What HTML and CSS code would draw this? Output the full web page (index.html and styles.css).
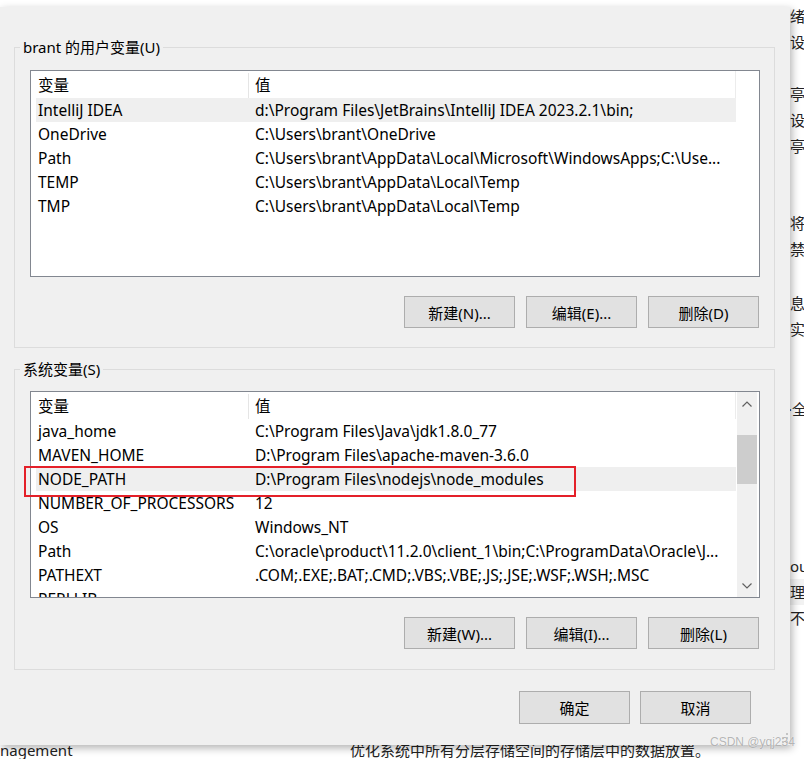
FILE: index.html
```html
<!DOCTYPE html>
<html lang="zh-CN">
<head>
    <meta charset="UTF-8">
    <meta name="viewport" content="width=device-width, initial-scale=1.0">
    <title>环境变量</title>
    <link rel="stylesheet" href="styles.css">
</head>
<body>
    <div class="backdrop">
        <div class="side">
            <div class="para p1"><div>绪论</div><div>设置</div></div>
            <div class="para p2"><div>亭止</div><div>设备</div><div>亭止</div></div>
            <div class="para p3"><div>将若</div><div>禁用</div></div>
            <div class="para p4"><div>息来</div><div>实现</div></div>
            <div class="para p5"><div class="dot-line"><span class="dot">·</span>全局</div></div>
            <div class="para p6"><div class="latin">out</div><div class="code">理器</div><div>不提</div></div>
        </div>
        <div class="foot">
            <span class="foot-left">nagement</span>
            <span class="foot-right">优化系统中所有分层存储空间的存储层中的数据放置。</span>
        </div>
    </div>

    <div class="dialog">
        <fieldset class="group group-user">
            <legend>brant 的用户变量(U)</legend>
            <div class="list">
                <div class="list-body">
                    <div class="list-head"><span class="col-name">变量</span><span class="col-value">值</span></div>
                    <div class="row selected"><span class="col-name">IntelliJ IDEA</span><span class="col-value">d:\Program Files\JetBrains\IntelliJ IDEA 2023.2.1\bin;</span></div>
                    <div class="row"><span class="col-name">OneDrive</span><span class="col-value">C:\Users\brant\OneDrive</span></div>
                    <div class="row"><span class="col-name">Path</span><span class="col-value">C:\Users\brant\AppData\Local\Microsoft\WindowsApps;C:\Use...</span></div>
                    <div class="row"><span class="col-name">TEMP</span><span class="col-value">C:\Users\brant\AppData\Local\Temp</span></div>
                    <div class="row"><span class="col-name">TMP</span><span class="col-value">C:\Users\brant\AppData\Local\Temp</span></div>
                </div>
            </div>
            <div class="buttons">
                <button class="btn">新建(N)...</button>
                <button class="btn">编辑(E)...</button>
                <button class="btn">删除(D)</button>
            </div>
        </fieldset>

        <fieldset class="group group-system">
            <legend>系统变量(S)</legend>
            <div class="list">
                <div class="list-body">
                    <div class="list-head"><span class="col-name">变量</span><span class="col-value">值</span></div>
                    <div class="row"><span class="col-name">java_home</span><span class="col-value">C:\Program Files\Java\jdk1.8.0_77</span></div>
                    <div class="row"><span class="col-name">MAVEN_HOME</span><span class="col-value">D:\Program Files\apache-maven-3.6.0</span></div>
                    <div class="row selected"><span class="col-name">NODE_PATH</span><span class="col-value">D:\Program Files\nodejs\node_modules</span></div>
                    <div class="row"><span class="col-name">NUMBER_OF_PROCESSORS</span><span class="col-value">12</span></div>
                    <div class="row"><span class="col-name">OS</span><span class="col-value">Windows_NT</span></div>
                    <div class="row"><span class="col-name">Path</span><span class="col-value">C:\oracle\product\11.2.0\client_1\bin;C:\ProgramData\Oracle\J...</span></div>
                    <div class="row"><span class="col-name">PATHEXT</span><span class="col-value">.COM;.EXE;.BAT;.CMD;.VBS;.VBE;.JS;.JSE;.WSF;.WSH;.MSC</span></div>
                    <div class="row"><span class="col-name">PERLLIB</span><span class="col-value"></span></div>
                </div>
                <div class="scrollbar">
                    <div class="scroll-btn">
                        <svg width="10" height="6" viewBox="0 0 10 6"><polyline points="0.5,5.5 5,1 9.5,5.5" fill="none" stroke="#606060" stroke-width="1.2"/></svg>
                    </div>
                    <div class="track"><div class="thumb"></div></div>
                    <div class="scroll-btn">
                        <svg width="10" height="6" viewBox="0 0 10 6"><polyline points="0.5,0.5 5,5 9.5,0.5" fill="none" stroke="#606060" stroke-width="1.2"/></svg>
                    </div>
                </div>
            </div>
            <div class="buttons">
                <button class="btn">新建(W)...</button>
                <button class="btn">编辑(I)...</button>
                <button class="btn">删除(L)</button>
            </div>
        </fieldset>

        <div class="dialog-buttons">
            <button class="btn">确定</button>
            <button class="btn">取消</button>
        </div>

        <!-- red annotation around NODE_PATH -->
        <div class="mark-box"></div>

        <svg class="grip" width="8" height="12" viewBox="0 0 8 12">
            <rect x="5" y="1" width="2" height="2" fill="#c4c4c4"/>
            <rect x="5" y="5" width="2" height="2" fill="#c4c4c4"/>
            <rect x="1" y="5" width="2" height="2" fill="#c4c4c4"/>
            <rect x="5" y="9" width="2" height="2" fill="#c4c4c4"/>
            <rect x="1" y="9" width="2" height="2" fill="#c4c4c4"/>
        </svg>
    </div>

    <div class="watermark">CSDN @yqj234</div>
</body>
</html>
```

FILE: styles.css
```css
html, body {
    margin: 0;
    padding: 0;
    width: 804px;
    height: 759px;
    overflow: hidden;
    background-color: #fff;
}
body {
    position: relative;
    font-family: "Noto Sans", "Noto Sans CJK SC", sans-serif;
    font-size: 15px;
    color: #000;
}

/* page behind the dialog */
.backdrop {
    display: flex;
    flex-direction: column;
    color: #222;
    font-family: "Noto Sans CJK SC", sans-serif;
}
.side {
    height: 740px;
    padding-left: 790px;
    white-space: nowrap;
    overflow: hidden;
}
.para div {
    height: 26px;
    line-height: 26px;
}
.p1 { padding-top: 3px; }
.p2 { margin-top: 26px; }
.p3 { margin-top: 51px; }
.p4 { margin-top: 28px; }
.p5 { margin-top: 54px; }
.p6 { margin-top: 131px; }
.dot-line {
    margin-left: -2px;
}
.dot {
    font-family: "Noto Sans", sans-serif;
}
.side .latin {
    font-family: "Noto Sans", sans-serif;
}
.side .code {
    background-color: #f2f2f2;
}
.foot {
    display: flex;
    height: 20px;
    line-height: 20px;
    white-space: nowrap;
}
.foot-left {
    font-family: "Noto Sans", sans-serif;
    width: 350px;
}

/* dialog */
.dialog {
    position: absolute;
    top: 7px;
    left: 0;
    width: 790px;
    height: 738px;
    box-sizing: border-box;
    padding-top: 30px;
    background-color: #f0f0f0;
    box-shadow: 2px 3px 8px rgba(0, 0, 0, 0.3);
}
.group {
    margin: 0 15px 0 14px;
    padding: 0 0 19px 0;
    border: 1px solid #dcdcdc;
    min-width: 0;
}
.group legend {
    margin-left: 5px;
    padding: 0 3px;
    line-height: 20px;
    height: 20px;
}
.group-system {
    margin-top: 11px;
    padding-bottom: 20px;
}
.list {
    display: flex;
    height: 207px;
    box-sizing: border-box;
    margin: 13px 14px 0 15px;
    padding-left: 5px;
    border: 1px solid #828790;
    background-color: #fff;
    font-size: 15.5px;
    overflow: hidden;
}
.group-system .list {
    margin-top: 12px;
}
.list-body {
    flex: none;
    width: 700px;
}
.list-head {
    display: flex;
    height: 27px;
    line-height: 25px;
    padding-top: 2px;
    box-sizing: border-box;
    border-right: 1px solid #ececec;
}
.list-head .col-name {
    border-right: 1px solid #e5e5e5;
}
.row {
    display: flex;
    height: 24px;
    line-height: 24px;
    white-space: nowrap;
}
.row.selected {
    background-color: #efefef;
}
.col-name {
    flex: none;
    width: 213px;
    box-sizing: border-box;
    padding-left: 2px;
    overflow: hidden;
}
.col-value {
    flex: 1;
    padding-left: 6px;
    overflow: hidden;
}

/* scrollbar */
.scrollbar {
    display: flex;
    flex-direction: column;
    width: 20px;
    margin-left: 1px;
    background-color: #f0f0f0;
}
.scroll-btn {
    height: 23px;
    display: flex;
    align-items: center;
    justify-content: center;
}
.scroll-btn svg {
    display: block;
}
.track {
    flex: 1;
}
.thumb {
    margin-top: 20px;
    height: 49px;
    background-color: #cdcdcd;
}

/* buttons */
.buttons {
    display: flex;
    justify-content: flex-end;
    gap: 11px;
    margin: 19px 15px 0 0;
}
.btn {
    width: 111px;
    height: 32px;
    padding: 0;
    border: 1px solid #adadad;
    background-color: #e1e1e1;
    font-family: "Noto Sans", "Noto Sans CJK SC", sans-serif;
    font-size: 15px;
    color: #000;
}
.dialog-buttons {
    display: flex;
    justify-content: flex-end;
    gap: 10px;
    margin: 21px 39px 0 0;
}
.dialog-buttons .btn {
    height: 33px;
}

/* overlays */
.mark-box {
    position: absolute;
    left: 24px;
    top: 459px;
    width: 552px;
    height: 31px;
    box-sizing: border-box;
    border: 2px solid #e42029;
}
.grip {
    position: absolute;
    right: 1px;
    bottom: 1px;
}
.watermark {
    position: absolute;
    left: 710px;
    top: 734px;
    line-height: 16px;
    font-family: "Liberation Sans", sans-serif;
    font-size: 12px;
    color: rgba(120, 120, 120, 0.55);
    text-shadow: 0 0 1px #fff;
    white-space: nowrap;
}
```
